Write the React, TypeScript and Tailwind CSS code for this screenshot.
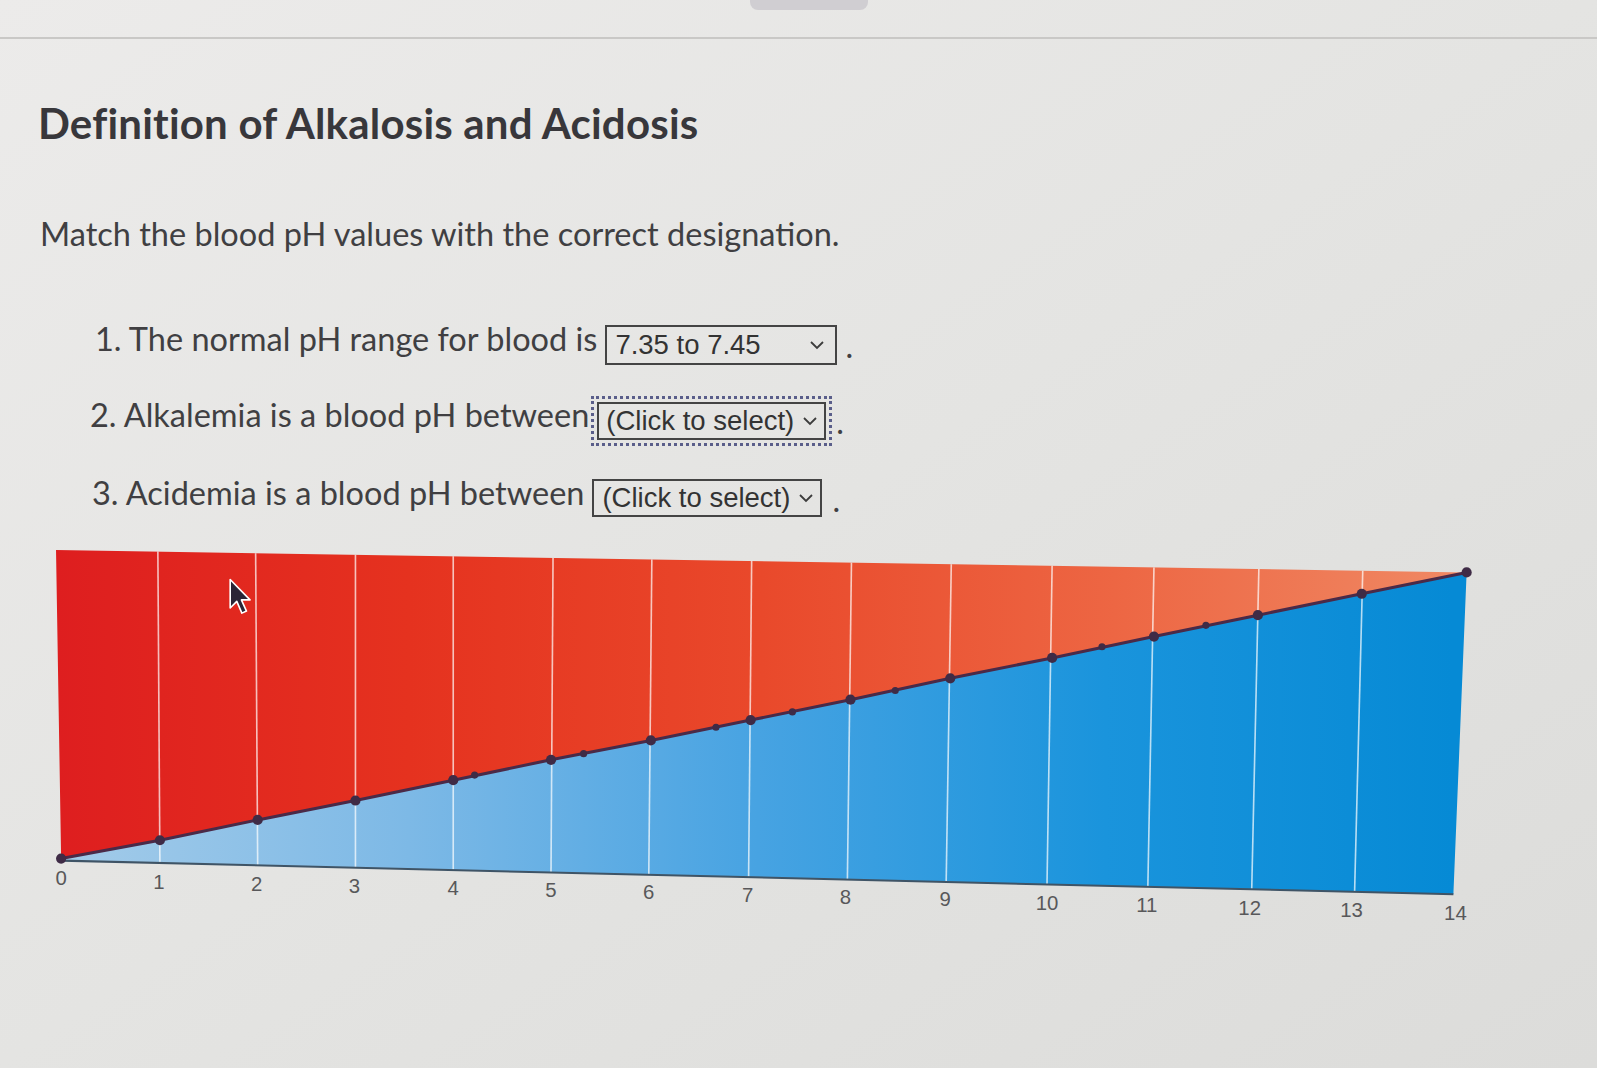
import React from "react";

const topX = [55, 155, 251, 349, 445, 543, 640, 738, 836, 934, 1033, 1133, 1236, 1338, 1440];
const botX = [60, 157, 253, 349, 445, 541, 637, 735, 832, 929, 1028, 1127, 1229, 1330, 1427];
const topY = (x: number) => 540 + ((x - 55) * 22) / 1385;
const botY = (x: number) => 845 + ((x - 60) * 33) / 1367;

const diag: [number, number][] = [
  [60, 843], [157, 825], [253, 805], [349, 786], [445, 766], [541, 746], [639, 727],
  [737, 707], [835, 687], [933, 666], [1033, 646], [1133, 625], [1235, 604], [1337, 583], [1440, 562],
];
const minorDots: [number, number][] = [
  [466, 761], [573, 740], [703, 714], [778, 699], [879, 678], [1082, 635], [1184, 614],
];
const labels: [string, number, number][] = [
  ["0", 60, 869], ["1", 156, 873], ["2", 252, 875], ["3", 348, 877], ["4", 445, 879],
  ["5", 541, 881], ["6", 637, 883], ["7", 734, 886], ["8", 830, 888], ["9", 928, 890],
  ["10", 1028, 893], ["11", 1126, 895], ["12", 1227, 898], ["13", 1327, 900], ["14", 1429, 903],
];

function Chevron() {
  return (
    <svg width="16" height="10" viewBox="0 0 16 10" className="shrink-0">
      <path d="M2 2 L8 8 L14 2" fill="none" stroke="#3c3c3c" strokeWidth="1.8" />
    </svg>
  );
}

function PhChart() {
  const diagPath = diag.map(([x, y]) => `${x},${y}`).join(" ");
  const redPoly = `55,540 1440,562 ${[...diag].reverse().map(([x, y]) => `${x},${y}`).join(" ")}`;
  const bluePoly = `${diagPath} 1427,878 60,845`;
  return (
    <svg width="1597" height="400" viewBox="0 520.4 1568 392.7" className="block mt-[15px]">
      <defs>
        <linearGradient id="acid" gradientUnits="userSpaceOnUse" x1="55" y1="0" x2="1440" y2="0">
          <stop offset="0" stopColor="#de1e1f" />
          <stop offset="0.25" stopColor="#e5321f" />
          <stop offset="0.5" stopColor="#e9492b" />
          <stop offset="0.75" stopColor="#ed6643" />
          <stop offset="1" stopColor="#f08964" />
        </linearGradient>
        <linearGradient id="base" gradientUnits="userSpaceOnUse" x1="60" y1="0" x2="1427" y2="0">
          <stop offset="0" stopColor="#a3cbe9" />
          <stop offset="0.25" stopColor="#7db9e6" />
          <stop offset="0.5" stopColor="#47a3e2" />
          <stop offset="0.75" stopColor="#1a94dc" />
          <stop offset="1" stopColor="#068ad5" />
        </linearGradient>
      </defs>
      <polygon points={redPoly} fill="url(#acid)" />
      <polygon points={bluePoly} fill="url(#base)" />
      {topX.map((tx, i) =>
        i === 0 || i === 14 ? null : (
          <line
            key={i}
            x1={tx}
            y1={topY(tx)}
            x2={botX[i]}
            y2={botY(botX[i])}
            stroke="#ffffff"
            strokeOpacity="0.7"
            strokeWidth="1.6"
          />
        )
      )}
      <line x1="60" y1="845" x2="1427" y2="878" stroke="#3f5466" strokeWidth="2" />
      <polyline points={diagPath} fill="none" stroke="#4a2a48" strokeWidth="3" />
      {diag.map(([x, y], i) => (
        <circle key={i} cx={x} cy={y} r="5" fill="#3f2b46" />
      ))}
      {minorDots.map(([x, y], i) => (
        <circle key={i} cx={x} cy={y} r="3.5" fill="#3f2b46" />
      ))}
      {labels.map(([t, x, y]) => (
        <text
          key={t}
          x={x}
          y={y}
          textAnchor="middle"
          fontFamily="'Liberation Sans', Arial, sans-serif"
          fontSize="20"
          fill="#58585a"
        >
          {t}
        </text>
      ))}
      {/* mouse pointer resting over the chart */}
      <path
        d="M226 569 L226 597 L232.5 590.5 L237.5 602 L242 600 L237 589 L245.5 589 Z"
        fill="#2b2436"
        stroke="#ffffff"
        strokeWidth="1.6"
        strokeLinejoin="round"
      />
    </svg>
  );
}

const selectFont = { fontFamily: "'Liberation Sans', Arial, sans-serif" };

export default function App() {
  return (
    <div
      className="w-[1597px] h-[1068px] overflow-hidden bg-gradient-to-br from-[#ecebea] via-[#e4e4e2] to-[#dcdcda] text-[#3f3e41]"
      style={{ fontFamily: "Lato, 'Open Sans', sans-serif" }}
    >
      <div className="h-[39px] border-b-2 border-[#c9c8c6]">
        <div className="ml-[750px] w-[118px] h-[10px] rounded-b-[8px] bg-[#d0ced2]" />
      </div>

      <h1 className="mt-[59px] ml-[38px] text-[42px] leading-[50px] font-bold text-[#38373b] tracking-[0.2px]">
        Definition of Alkalosis and Acidosis
      </h1>

      <p className="mt-[66px] ml-[40px] text-[32.5px] leading-[40px] text-[#403f42]">
        Match the blood pH values with the correct designation.
      </p>

      <div className="mt-[63px] flex flex-col text-[32.5px] leading-[44px] text-[#403f42]">
        <div className="ml-[95px] h-[44px] flex items-center">
          <span>1. The normal pH range for blood is</span>
          <div
            className="ml-[8px] mt-[12px] w-[232px] h-[40px] border-2 border-[#444] flex items-center justify-between pl-[8px] pr-[10px] text-[27.5px] text-[#333]"
            style={selectFont}
          >
            <span>7.35 to 7.45</span>
            <Chevron />
          </div>
          <span className="ml-[8px] self-end leading-[30px]">.</span>
        </div>

        <div className="mt-[32px] ml-[90px] h-[44px] flex items-center">
          <span>2. Alkalemia is a blood pH between</span>
          <div className="ml-[2px] mt-[12px] p-[3px] border-[3px] border-dotted border-[#5a5e8a]">
            <div
              className="w-[229px] h-[38px] border-2 border-[#444] flex items-center justify-between pl-[7px] pr-[6px] text-[27.5px] text-[#333]"
              style={selectFont}
            >
              <span>(Click to select)</span>
              <Chevron />
            </div>
          </div>
          <span className="ml-[4px] self-end leading-[30px]">.</span>
        </div>

        <div className="mt-[34px] ml-[92px] h-[44px] flex items-center">
          <span>3. Acidemia is a blood pH between</span>
          <div
            className="ml-[8px] mt-[10px] w-[230px] h-[38px] border-2 border-[#444] flex items-center justify-between pl-[8px] pr-[6px] text-[27.5px] text-[#333]"
            style={selectFont}
          >
            <span>(Click to select)</span>
            <Chevron />
          </div>
          <span className="ml-[10px] self-end leading-[30px]">.</span>
        </div>
      </div>

      <PhChart />
    </div>
  );
}
